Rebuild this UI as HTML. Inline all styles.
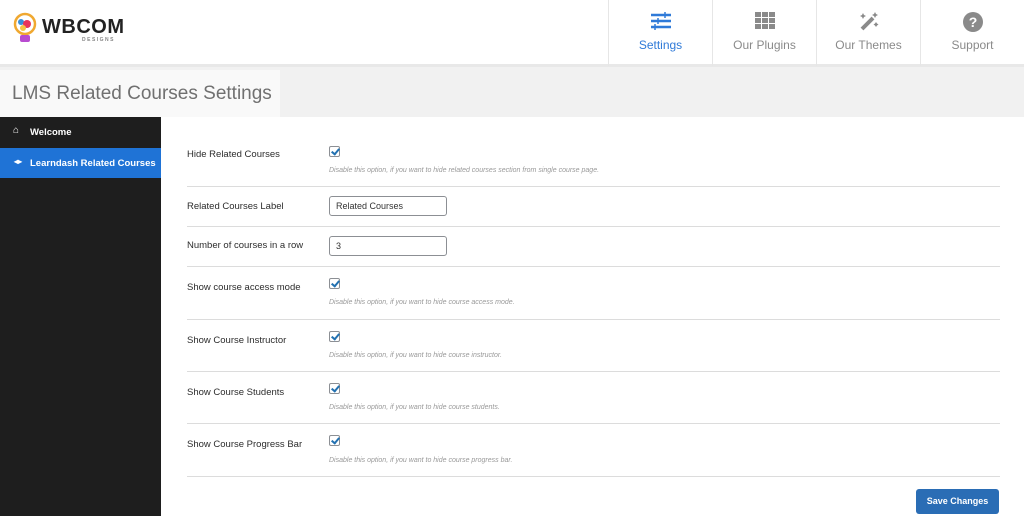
<!DOCTYPE html>
<html><head><meta charset="utf-8"><style>
*{margin:0;padding:0;box-sizing:border-box}
body{width:1024px;height:516px;overflow:hidden;background:#f1f1f1;font-family:"Liberation Sans",sans-serif;position:relative}
.hdr{position:absolute;left:0;top:0;width:1024px;height:67px;background:#fff;border-bottom:3px solid #e8e8e8}
.nav{position:absolute;top:0;height:66px;width:104px;border-left:1px solid #e6e6e6;text-align:center;font-size:12px;color:#8a8a8a}
.nav .lbl{position:absolute;top:38px;left:0;right:0}
.nav svg{position:absolute;top:12px;left:42px}
.tbar{position:absolute;top:70px;left:0;width:280px;height:47px;background:#f9f9f9;font-size:19px;color:#707070;padding:13px 0 0 12px;white-space:nowrap;overflow:hidden}
.side{position:absolute;left:0;top:117px;width:161px;height:399px;background:#1e1e1e}
.si{height:31px;color:#fff;font-size:9.5px;font-weight:bold;padding:10px 0 0 30px;position:relative}
.si.on{background:#1f73d6;height:30px}
.main{position:absolute;left:161px;top:117px;width:863px;height:399px;background:#fff}
.row{position:absolute;left:26px;width:813px;border-bottom:1px solid #dcdcdc}
.lab{position:absolute;left:0;font-size:9.5px;color:#2c2c2c}
.cb{position:absolute;left:142px;width:11px;height:11px;border:1px solid #8c8f94;border-radius:2px;background:#fff}
.cb:after{content:"";position:absolute;left:3px;top:0px;width:3px;height:6px;border:solid #2271b1;border-width:0 2px 2px 0;transform:rotate(40deg)}
.desc{position:absolute;left:142px;font-size:7px;font-style:italic;color:#999}
.inp{position:absolute;left:142px;width:118px;height:20px;border:1px solid #8c8f94;border-radius:3px;font-size:9px;color:#333;padding:4px 6px}
.btn{position:absolute;left:755px;top:372px;width:83px;height:25px;background:#2a6db5;border-radius:3px;color:#fff;font-size:9px;font-weight:bold;text-align:center;line-height:25px}
</style></head><body>
<div class="hdr">
 <svg style="position:absolute;left:12px;top:12px" width="26" height="34" viewBox="0 0 26 34"><circle cx="13" cy="12" r="10" fill="none" stroke="#f0a830" stroke-width="2.5"/><circle cx="9" cy="10" r="3" fill="#3a8fd8"/><circle cx="15" cy="12" r="4" fill="#e8345a"/><circle cx="11" cy="16" r="3" fill="#f6c343"/><rect x="8" y="23" width="10" height="7" rx="2" fill="#b84bd0"/></svg>
 <div style="position:absolute;left:42px;top:16px;font-size:20px;font-weight:bold;color:#222;letter-spacing:0.5px">WBCOM</div>
 <div style="position:absolute;left:82px;top:37px;font-size:5px;color:#888;letter-spacing:1.5px;font-weight:bold">DESIGNS</div>
 <div class="nav" style="left:608px;color:#2f7ad8"><svg width="20" height="18" viewBox="0 0 20 18"><g stroke="#2f7ad8" stroke-width="2.5"><line x1="0" y1="3" x2="20" y2="3"/><line x1="0" y1="9" x2="20" y2="9"/><line x1="0" y1="15" x2="20" y2="15"/></g><g stroke="#2f7ad8" stroke-width="1.5"><line x1="14" y1="0" x2="14" y2="6"/><line x1="7" y1="6" x2="7" y2="12"/><line x1="4" y1="12" x2="4" y2="18"/></g></svg><div class="lbl">Settings</div></div>
 <div class="nav" style="left:712px"><svg width="20" height="18" viewBox="0 0 20 18" fill="#8a8a8a"><rect x="0" y="0" width="6" height="5"/><rect x="7" y="0" width="6" height="5"/><rect x="14" y="0" width="6" height="5"/><rect x="0" y="6" width="6" height="5"/><rect x="7" y="6" width="6" height="5"/><rect x="14" y="6" width="6" height="5"/><rect x="0" y="12" width="6" height="5"/><rect x="7" y="12" width="6" height="5"/><rect x="14" y="12" width="6" height="5"/></svg><div class="lbl">Our Plugins</div></div>
 <div class="nav" style="left:816px"><svg width="20" height="20" viewBox="0 0 20 20"><line x1="3" y1="17" x2="14" y2="6" stroke="#8a8a8a" stroke-width="4"/><path d="M4 1l1 2 2 1-2 1-1 2-1-2-2-1 2-1zM16 0l1 2 2 1-2 1-1 2-1-2-2-1 2-1zM17 10l1 1.5 1.5 1-1.5 1-1 1.5-1-1.5-1.5-1 1.5-1z" fill="#8a8a8a"/></svg><div class="lbl">Our Themes</div></div>
 <div class="nav" style="left:920px"><svg width="20" height="20" viewBox="0 0 20 20"><circle cx="10" cy="10" r="10" fill="#8a8a8a"/><text x="10" y="15" text-anchor="middle" font-size="14" font-weight="bold" fill="#fff" font-family="Liberation Sans">?</text></svg><div class="lbl">Support</div></div>
</div>
<div class="tbar">LMS Related Courses Settings</div>
<div class="side">
 <div class="si"><span style="position:absolute;left:13px;top:8px;font-size:10px">⌂</span>Welcome</div>
 <div class="si on"><span style="position:absolute;left:14px;top:9px;font-size:8px">◂▸</span>Learndash Related Courses</div>
</div>
<div class="main">
 <div class="row" style="top:0;height:70px"><div class="lab" style="top:32px">Hide Related Courses</div><div class="cb" style="top:29px"></div><div class="desc" style="top:50px">Disable this option, if you want to hide related courses section from single course page.</div></div>
 <div class="row" style="top:70px;height:40px"><div class="lab" style="top:14px">Related Courses Label</div><div class="inp" style="top:9px">Related Courses</div></div>
 <div class="row" style="top:110px;height:40px"><div class="lab" style="top:13px">Number of courses in a row</div><div class="inp" style="top:9px">3</div></div>
 <div class="row" style="top:150px;height:53px"><div class="lab" style="top:15px">Show course access mode</div><div class="cb" style="top:11px"></div><div class="desc" style="top:32px">Disable this option, if you want to hide course access mode.</div></div>
 <div class="row" style="top:203px;height:52px"><div class="lab" style="top:15px">Show Course Instructor</div><div class="cb" style="top:11px"></div><div class="desc" style="top:32px">Disable this option, if you want to hide course instructor.</div></div>
 <div class="row" style="top:255px;height:52px"><div class="lab" style="top:15px">Show Course Students</div><div class="cb" style="top:11px"></div><div class="desc" style="top:32px">Disable this option, if you want to hide course students.</div></div>
 <div class="row" style="top:307px;height:53px"><div class="lab" style="top:15px">Show Course Progress Bar</div><div class="cb" style="top:11px"></div><div class="desc" style="top:33px">Disable this option, if you want to hide course progress bar.</div></div>
 <div class="btn">Save Changes</div>
</div>
</body></html>
